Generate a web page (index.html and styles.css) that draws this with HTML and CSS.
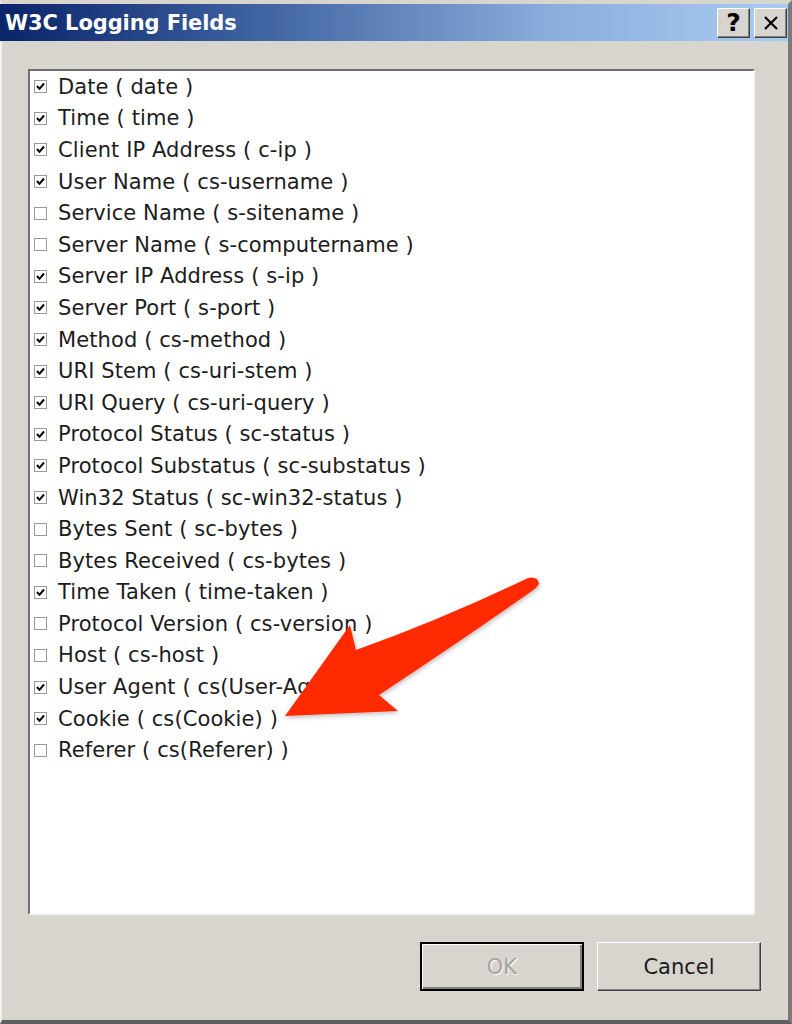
FILE: index.html
```html
<!DOCTYPE html>
<html lang="en">
<head>
    <meta charset="UTF-8">
    <title>W3C Logging Fields</title>
    <link rel="stylesheet" href="styles.css">
</head>
<body>
    <div class="window">
        <div class="title-bar">
            <span class="title-text">W3C Logging Fields</span>
            <div class="title-buttons">
                <button class="caption-btn help-btn">?</button>
                <button class="caption-btn close-btn">
                    <svg width="16" height="16" viewBox="0 0 16 16"><path d="M2 2 L14 14 M14 2 L2 14" stroke="#000" stroke-width="2.2"/></svg>
                </button>
            </div>
        </div>

        <div class="dialog-body">
            <ul class="field-list" id="fieldList"></ul>

            <div class="button-row">
                <button class="push-btn default-btn" disabled>OK</button>
                <button class="push-btn">Cancel</button>
            </div>
        </div>
    </div>

    <!-- annotation arrow drawn over the list -->
    <svg class="annotation" width="792" height="1024" viewBox="0 0 792 1024">
        <defs>
            <filter id="arrowShadow" x="-10%" y="-10%" width="130%" height="130%">
                <feDropShadow dx="1" dy="2" stdDeviation="2" flood-color="#000" flood-opacity="0.25"/>
            </filter>
        </defs>
        <path d="M528 578 Q538 576 539 584 Q536 589 532 591 Q462 640 379 695 L398 711 L285 716 L350 625 L356 650 Q440 620 528 578 Z"
              fill="#ff2a00" filter="url(#arrowShadow)"/>
    </svg>

    <script>
        const fields = [
            ['Date ( date )', true],
            ['Time ( time )', true],
            ['Client IP Address ( c-ip )', true],
            ['User Name ( cs-username )', true],
            ['Service Name ( s-sitename )', false],
            ['Server Name ( s-computername )', false],
            ['Server IP Address ( s-ip )', true],
            ['Server Port ( s-port )', true],
            ['Method ( cs-method )', true],
            ['URI Stem ( cs-uri-stem )', true],
            ['URI Query ( cs-uri-query )', true],
            ['Protocol Status ( sc-status )', true],
            ['Protocol Substatus ( sc-substatus )', true],
            ['Win32 Status ( sc-win32-status )', true],
            ['Bytes Sent ( sc-bytes )', false],
            ['Bytes Received ( cs-bytes )', false],
            ['Time Taken ( time-taken )', true],
            ['Protocol Version ( cs-version )', false],
            ['Host ( cs-host )', false],
            ['User Agent ( cs(User-Agent) )', true],
            ['Cookie ( cs(Cookie) )', true],
            ['Referer ( cs(Referer) )', false]
        ];

        const list = document.getElementById('fieldList');
        const tick = '<svg width="9" height="9" viewBox="0 0 9 9"><path d="M1 4 L3.5 6.8 L8 1.5" fill="none" stroke="#000" stroke-width="2"/></svg>';

        fields.forEach(function(f) {
            const li = document.createElement('li');
            li.className = 'field-row';
            li.innerHTML = '<span class="check-box">' + (f[1] ? tick : '') + '</span>' +
                           '<span class="field-label">' + f[0] + '</span>';
            list.appendChild(li);
        });
    </script>
</body>
</html>
```

FILE: styles.css
```css
:root {
    --face: #d8d5ce;
    --shadow: #808080;
    --dark-shadow: #404040;
    --highlight: #ffffff;
    --text: #1c1c1c;
}

body {
    margin: 0;
    padding: 0;
    background: var(--face);
    font-family: 'DejaVu Sans', 'Liberation Sans', sans-serif;
    overflow: hidden;
}

.window {
    width: 792px;
    height: 1024px;
    box-sizing: border-box;
    background: var(--face);
    border-left: 2px solid #f2f1ee;
    border-top: 4px solid var(--face);
    border-right: 4px solid #7a7a7a;
    border-bottom: 4px solid #5e5e5e;
    display: flex;
    flex-direction: column;
}

/* Title bar */
.title-bar {
    height: 37px;
    margin-left: -2px;
    display: flex;
    align-items: center;
    justify-content: space-between;
    background: linear-gradient(to right, #0a246a 0%, #3a5d9c 30%, #8aaedc 70%, #a8ccf2 100%);
}
.title-text {
    color: #fff;
    font-weight: bold;
    font-size: 21px;
    padding-left: 5px;
    letter-spacing: -0.1px;
}
.title-buttons {
    display: flex;
    gap: 4px;
    padding-right: 1px;
}
.caption-btn {
    width: 33px;
    height: 30px;
    padding: 0;
    margin: 0;
    background: var(--face);
    border: 1px solid;
    border-color: var(--highlight) var(--dark-shadow) var(--dark-shadow) var(--highlight);
    box-shadow: inset -1px -1px 0 var(--shadow);
    display: flex;
    align-items: center;
    justify-content: center;
    font-family: 'DejaVu Sans', sans-serif;
    font-weight: bold;
    font-size: 25px;
    color: #000;
    line-height: 1;
}

/* Dialog contents */
.dialog-body {
    flex: 1;
    display: flex;
    flex-direction: column;
    padding: 28px 27px 0 26px;
}

.field-list {
    list-style: none;
    margin: 0 6px 0 0;
    padding: 0 0 0 4px;
    height: 846px;
    box-sizing: border-box;
    background: #fff;
    border: 2px solid;
    border-color: #6e6e6e #f4f4f4 #f4f4f4 #6e6e6e;
}
.field-row {
    height: 31.6px;
    display: flex;
    align-items: center;
}
.check-box {
    width: 11px;
    height: 11px;
    border: 1px solid #9a9a9a;
    background: #fff;
    display: flex;
    align-items: center;
    justify-content: center;
    margin-right: 11px;
    flex-shrink: 0;
}
.field-label {
    font-size: 21px;
    color: var(--text);
    white-space: nowrap;
    letter-spacing: 0.1px;
}

.button-row {
    display: flex;
    justify-content: flex-end;
    gap: 13px;
    margin-top: 27px;
}
.push-btn {
    width: 164px;
    height: 49px;
    margin: 0;
    background: var(--face);
    border: 1px solid;
    border-color: var(--highlight) var(--dark-shadow) var(--dark-shadow) var(--highlight);
    box-shadow: inset -1px -1px 0 var(--shadow);
    font-family: 'DejaVu Sans', sans-serif;
    font-size: 21px;
    color: var(--text);
}
.default-btn {
    border: 2px solid #000;
    box-shadow: inset 1px 1px 0 var(--highlight), inset -2px -2px 0 var(--shadow);
}
.push-btn:disabled {
    color: #a3a3a3;
    text-shadow: 1px 1px 0 #fff;
}

.annotation {
    position: absolute;
    left: 0;
    top: 0;
    pointer-events: none;
}
```
